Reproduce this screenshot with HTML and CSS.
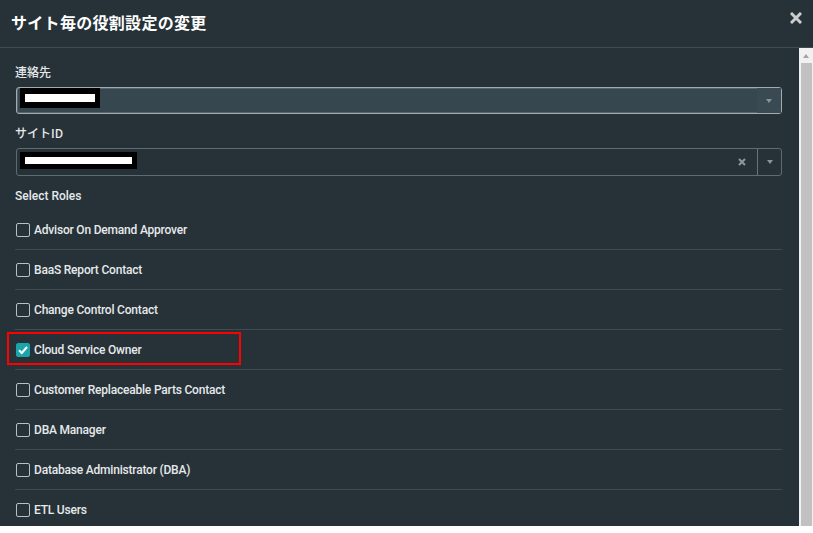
FILE: index.html
```html
<!DOCTYPE html>
<html lang="ja">
<head>
<meta charset="utf-8">
<title>サイト毎の役割設定の変更</title>
<link rel="stylesheet" href="styles.css">
</head>
<body>
<div class="modal">
  <header class="modal-header">
    <h1 class="modal-title">サイト毎の役割設定の変更</h1>
    <span class="close-btn" aria-label="close">
      <svg width="12" height="12" viewBox="0 0 12 12"><path d="M2 2 L10 10 M10 2 L2 10" stroke="#c9cdcf" stroke-width="3" stroke-linecap="square"/></svg>
    </span>
  </header>
  <div class="modal-main">
    <div class="modal-body">
      <div class="field-label">連絡先</div>
      <div class="select select-contact">
        <span class="redact redact-a"></span>
        <span class="select-arrow-zone"><span class="tri"></span></span>
      </div>
      <div class="field-label field-label-site">サイトID</div>
      <div class="select select-site">
        <span class="redact redact-b"></span>
        <span class="clear-x">
          <svg width="8" height="8" viewBox="0 0 8 8"><path d="M1 1 L7 7 M7 1 L1 7" stroke="#8d979c" stroke-width="2"/></svg>
        </span>
        <span class="select-arrow-zone site-arrow"><span class="tri"></span></span>
      </div>
      <div class="roles-label">Select Roles</div>
      <ul class="roles">
        <li class="role"><span class="cb"></span><span class="role-name">Advisor On Demand Approver</span></li>
        <li class="role"><span class="cb"></span><span class="role-name">BaaS Report Contact</span></li>
        <li class="role"><span class="cb"></span><span class="role-name">Change Control Contact</span></li>
        <li class="role role-highlight">
          <span class="cb cb-checked">
            <svg width="14" height="14" viewBox="0 0 14 14"><path d="M3 7.2 L5.8 10 L11 4" fill="none" stroke="#fff" stroke-width="2"/></svg>
          </span>
          <span class="role-name">Cloud Service Owner</span>
          <span class="highlight-box"></span>
        </li>
        <li class="role"><span class="cb"></span><span class="role-name">Customer Replaceable Parts Contact</span></li>
        <li class="role"><span class="cb"></span><span class="role-name">DBA Manager</span></li>
        <li class="role"><span class="cb"></span><span class="role-name">Database Administrator (DBA)</span></li>
        <li class="role"><span class="cb"></span><span class="role-name">ETL Users</span></li>
      </ul>
    </div>
    <div class="scrollbar">
      <div class="sb-btn"><span class="sb-tri"></span></div>
      <div class="sb-track"><div class="sb-thumb"></div></div>
    </div>
  </div>
</div>
</body>
</html>
```

FILE: styles.css
```css
* { box-sizing: border-box; }
html, body {
  margin: 0;
  padding: 0;
  height: 100%;
  overflow: hidden;
}
body {
  background: #ffffff;
  font-family: Roboto, "Liberation Sans", "Noto Sans CJK JP", sans-serif;
  color: #e4e7e8;
}
.modal {
  display: flex;
  flex-direction: column;
  height: 526px;
  background: #263238;
  overflow: hidden;
}
.modal-header {
  height: 48px;
  flex: none;
  display: flex;
  align-items: center;
  justify-content: space-between;
  padding: 0 11px 3px 11px;
  border-bottom: 1px solid #3d4b52;
}
.modal-title {
  margin: 0;
  font-family: "Noto Sans CJK JP", sans-serif;
  font-size: 16px;
  font-weight: 700;
  color: #ffffff;
  letter-spacing: 0.3px;
}
.close-btn {
  display: flex;
  margin-top: -8px;
  margin-right: 0;
}
.modal-main {
  flex: 1;
  display: flex;
  min-height: 0;
}
.modal-body {
  flex: 1;
  padding: 16px 17px 0 15px;
  overflow: hidden;
}
.field-label {
  font-family: "Noto Sans CJK JP", sans-serif;
  font-size: 12px;
  line-height: 16px;
  height: 16px;
  font-weight: 500;
  color: #e6e9ea;
  margin-bottom: 7px;
}
.field-label-site { margin-top: 11px; }
.select {
  position: relative;
  height: 27px;
  margin-left: 1px;
  border-radius: 3px;
  display: flex;
  align-items: flex-start;
}
.select-contact {
  background: #37474f;
  border: 1px solid #a3abb0;
  box-shadow: inset 0 0 0 1px #56646b;
}
.select-site {
  height: 28px;
  border: 1px solid #5e6b72;
  background: #263238;
}
.redact {
  display: block;
  background: #ffffff;
  border-style: solid;
  border-color: #000;
}
.redact-a {
  margin-left: 3px;
  width: 80px;
  height: 20px;
  border-width: 6px 5px 6px 5px;
}
.redact-b {
  margin-left: 3px;
  margin-top: 3px;
  width: 117px;
  height: 17px;
  border-width: 5px 5px 5px 5px;
}
.select-arrow-zone {
  margin-left: auto;
  width: 24px;
  height: 100%;
  display: flex;
  align-items: center;
  justify-content: center;
}
.select-contact .select-arrow-zone {
  background: #3a4a52;
}
.site-arrow {
  border-left: 1px solid #66737a;
  margin-left: 0;
}
.tri {
  width: 0;
  height: 0;
  border-left: 3px solid transparent;
  border-right: 3px solid transparent;
  border-top: 4px solid #8a959b;
}
.clear-x {
  margin-left: auto;
  margin-right: 11px;
  height: 100%;
  display: flex;
  align-items: center;
}
.roles-label {
  margin-top: 12px;
  font-size: 12px;
  line-height: 16px;
  font-weight: 500;
  color: #e6e9ea;
}
.roles {
  list-style: none;
  margin: 6px 0 0 0;
  padding: 0;
}
.role {
  position: relative;
  height: 40px;
  border-bottom: 1px solid #3e4b52;
  display: flex;
  align-items: center;
  padding-left: 1px;
}
.cb {
  width: 14px;
  height: 14px;
  border: 1px solid #b7c0c4;
  border-radius: 2px;
  flex: none;
  display: flex;
}
.cb-checked {
  background: #1aa5ab;
  border-color: #1aa5ab;
}
.cb-checked svg { margin: -1px; }
.role-name {
  margin-left: 4px;
  font-size: 12px;
  font-weight: 500;
  color: #e6e9ea;
  letter-spacing: -0.2px;
}
.highlight-box {
  position: absolute;
  left: -8px;
  top: 2px;
  width: 234px;
  height: 33px;
  border: 2px solid #ff0000;
}
.scrollbar {
  width: 14px;
  flex: none;
  display: flex;
  flex-direction: column;
  background: #f1f1f1;
}
.sb-btn {
  height: 15px;
  display: flex;
  align-items: center;
  justify-content: center;
}
.sb-tri {
  width: 0;
  height: 0;
  border-left: 3px solid transparent;
  border-right: 3px solid transparent;
  border-bottom: 4px solid #a3a3a3;
}
.sb-track {
  flex: 1;
  padding: 0 1px 0 2px;
}
.sb-thumb {
  height: 100%;
  background: #c1c1c1;
}
```
